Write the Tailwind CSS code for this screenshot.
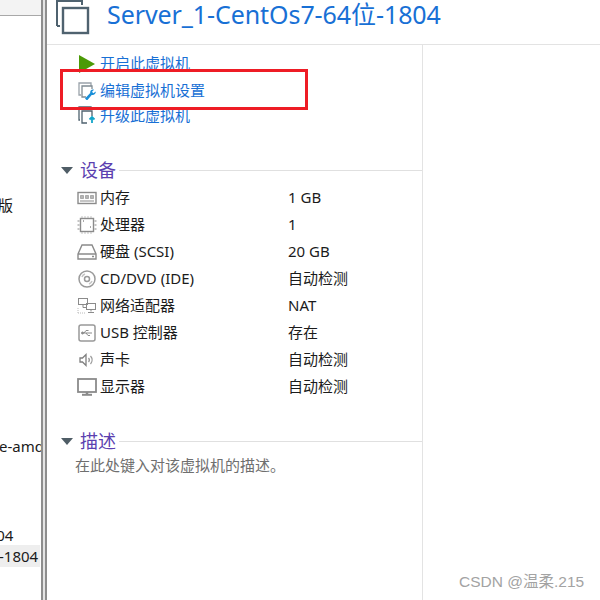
<!DOCTYPE html>
<html lang="zh-CN">
<head>
    <meta charset="UTF-8">
    <title>Server_1-CentOs7-64位-1804</title>
    <script src="https://cdn.jsdelivr.net/npm/@tailwindcss/browser@4"></script>
</head>
<body class="bg-white w-[600px] h-[600px] overflow-hidden font-['Noto_Sans','Noto_Sans_CJK_SC',sans-serif] text-[15px] text-[#1b1b1b]">
    <div class="flex h-[600px]">
        <!-- library tree, cut off on the left -->
        <aside class="w-[41px] shrink-0 overflow-hidden">
            <div class="h-[16px] bg-[#f3f3f3] border-b border-[#a8a8a8]"></div>
            <div class="mt-[178px] h-[22px] leading-[22px] -ml-[2px]">版</div>
            <div class="mt-[219px] h-[22px] leading-[22px] -ml-[1px] whitespace-nowrap">e-amd64</div>
            <div class="mt-[67px] h-[22px] leading-[22px] -ml-[21px] whitespace-nowrap">1804</div>
            <div class="-mt-[1px] h-[22px] leading-[22px] bg-[#eeeeee] mr-[1px] whitespace-nowrap pl-[2px] -indent-[3px]">-1804</div>
        </aside>
        <div class="w-[6px] shrink-0 bg-[#e4e4e4] border-x-2 border-[#8e8e8e]"></div>

        <main class="flex-1 flex flex-col min-w-0">
            <header class="h-[45px] shrink-0 flex items-center gap-[16px] pl-[8px] border-b border-[#e3e3e3]">
                <svg class="w-[36px] h-[36px] shrink-0 -mt-[10px]" viewBox="0 0 36 36" fill="none" stroke="#4f626f" stroke-width="2">
                    <path d="M2 27V2h25v4"/>
                    <path d="M2 27h3"/>
                    <rect x="8" y="9" width="25" height="25" stroke-width="2.400"/>
                </svg>
                <h1 class="text-[25px] leading-[30px] text-[#1870d5] whitespace-nowrap -mt-[16px] tracking-[-0.08px]">Server_1-CentOs7-64位-1804</h1>
            </header>

            <div class="flex flex-1 min-h-0">
                <div class="w-[376px] shrink-0 border-r border-[#e3e3e3]">
                    <!-- actions -->
                    <ul class="pt-[5px] text-[#1870d5]">
                        <li class="h-[27px] flex items-center gap-[4px] pl-[31px]">
                            <svg class="w-[18px] h-[20px]" viewBox="0 0 18 20"><path d="M1 1 17 10 1 19Z" fill="#4b9a06"/></svg>
                            <span>开启此虚拟机</span>
                        </li>
                        <li class="h-[27px] flex items-center gap-[4px] pl-[31px]">
                            <svg class="w-[18px] h-[18px]" viewBox="0 0 18 18" fill="none">
                                <path d="M3 13H1V1h12v3" stroke="#9aa3aa" stroke-width="1.300"/>
                                <path d="M8 15H4V4h10v3" stroke="#7f8b93" stroke-width="1.300"/>
                                <path d="M8.500 18 7 16.500l5.200-5.500c-.4-2.300 1.600-4 3.800-3.200L14 9.800l1.300 1.400 2.500-1.800c.3 2.300-1.900 4.200-4.100 3.500L9.500 18z" fill="#1a8fd8"/>
                            </svg>
                            <span>编辑虚拟机设置</span>
                        </li>
                        <li class="-mt-[2px] h-[26px] flex items-center gap-[4px] pl-[31px]">
                            <svg class="w-[18px] h-[18px]" viewBox="0 0 18 18" fill="none">
                                <path d="M2 14H1V1h12v1" stroke="#4f626f" stroke-width="1.300"/>
                                <path d="M9 17H4V5h10v5" stroke="#4f626f" stroke-width="1.300"/>
                                <path d="M14 17v-6M11.500 13.500 14 11l2.500 2.500" stroke="#12a5c9" stroke-width="1.800"/>
                            </svg>
                            <span>升级此虚拟机</span>
                        </li>
                    </ul>

                    <!-- devices -->
                    <section class="mt-[29px]">
                        <div class="flex items-center h-[26px] pl-[14px]">
                            <span class="w-0 h-0 border-x-[6px] border-x-transparent border-t-[7px] border-t-[#4f5d66]"></span>
                            <h2 class="ml-[7px] mr-[3px] text-[18px] text-[#5b3fb0]">设备</h2>
                            <div class="flex-1 h-px bg-[#e0e0e0]"></div>
                        </div>
                        <div class="grid grid-cols-[211px_1fr] auto-rows-[27px] items-center pl-[30px] mt-[1px]">
                            <div class="flex items-center gap-[3px]">
                                <svg class="w-[20px] h-[18px] shrink-0" viewBox="0 0 20 18" fill="none" stroke="#8b8b8b">
                                    <rect x="1" y="3.500" width="18" height="11" stroke-width="1.400"/>
                                    <path d="M3.500 6.500h3v3h-3zM8.500 6.500h3v3h-3zM13.500 6.500h3v3h-3z" fill="#b5b5b5" stroke-width="0.600"/>
                                    <path d="M3 12h14"/>
                                </svg>
                                <span>内存</span>
                            </div>
                            <div>1 GB</div>
                            <div class="flex items-center gap-[3px]">
                                <svg class="w-[20px] h-[18px] shrink-0" viewBox="0 0 20 18" fill="none" stroke="#8b8b8b">
                                    <rect x="3.500" y="2.500" width="13" height="13" stroke-width="1.400"/>
                                    <path d="M5 0.500v1M8 0.500v1M11 0.500v1M14 0.500v1M5 16.500v1M8 16.500v1M11 16.500v1M14 16.500v1M0.500 5h2M0.500 9h2M0.500 13h2M17.500 5h2M17.500 9h2M17.500 13h2"/>
                                    <path d="M6 5h1M13 11h1" stroke="#555"/>
                                </svg>
                                <span>处理器</span>
                            </div>
                            <div>1</div>
                            <div class="flex items-center gap-[3px]">
                                <svg class="w-[20px] h-[18px] shrink-0" viewBox="0 0 20 18" fill="none" stroke="#8b8b8b" stroke-width="1.400">
                                    <path d="M1 11 5 2h10l4 9v5H1z"/>
                                    <path d="M1 11h18M15 13.500h2"/>
                                </svg>
                                <span>硬盘 (SCSI)</span>
                            </div>
                            <div>20 GB</div>
                            <div class="flex items-center gap-[3px]">
                                <svg class="w-[20px] h-[18px] shrink-0" viewBox="0 0 20 18" fill="none" stroke="#9a9a9a" stroke-width="1.500">
                                    <circle cx="10" cy="9" r="8"/>
                                    <circle cx="10" cy="9" r="2.500"/>
                                    <path d="M5 7a5 5 0 0 1 3-3M15 11a5 5 0 0 1-3 3" stroke="#c4c4c4"/>
                                </svg>
                                <span>CD/DVD (IDE)</span>
                            </div>
                            <div>自动检测</div>
                            <div class="flex items-center gap-[3px]">
                                <svg class="w-[20px] h-[18px] shrink-0" viewBox="0 0 20 18" fill="none" stroke="#8b8b8b">
                                    <rect x="1.500" y="1.500" width="9" height="6"/>
                                    <rect x="9.500" y="6.500" width="9" height="6"/>
                                    <path d="M14 12.500v2M11 15.500h6M6 7.500v3h3"/>
                                    <path d="M1 16h8M1 11v5" stroke="#bbb" stroke-dasharray="1 1"/>
                                </svg>
                                <span>网络适配器</span>
                            </div>
                            <div>NAT</div>
                            <div class="flex items-center gap-[3px]">
                                <svg class="w-[20px] h-[18px] shrink-0" viewBox="0 0 20 18" fill="none" stroke="#8b8b8b">
                                    <rect x="2" y="1" width="16" height="16" rx="2" stroke="#999" stroke-width="1.500"/>
                                    <path d="M5 9h10M7 9l2-2.500h2.500M9 9l2 2.500h2"/>
                                    <circle cx="5.500" cy="9" r="1" fill="#8b8b8b"/>
                                </svg>
                                <span>USB 控制器</span>
                            </div>
                            <div>存在</div>
                            <div class="flex items-center gap-[3px]">
                                <svg class="w-[20px] h-[18px] shrink-0" viewBox="0 0 20 18" fill="none" stroke="#7f7f7f" stroke-width="1.300">
                                    <path d="M3 7v4h2.500L9 14.500v-11L5.500 7z"/>
                                    <path d="M11.500 7a3 3 0 0 1 0 4M13.500 5a6 6 0 0 1 0 8" stroke="#999"/>
                                </svg>
                                <span>声卡</span>
                            </div>
                            <div>自动检测</div>
                            <div class="flex items-center gap-[3px]">
                                <svg class="w-[20px] h-[18px] shrink-0" viewBox="0 0 20 18" fill="none" stroke="#8b8b8b">
                                    <rect x="1" y="1" width="18" height="13" stroke-width="1.800"/>
                                    <path d="M10 14v2" stroke-width="2.500"/>
                                    <path d="M5 16.800h10" stroke-width="2"/>
                                </svg>
                                <span>显示器</span>
                            </div>
                            <div>自动检测</div>
                        </div>
                    </section>

                    <!-- description -->
                    <section class="mt-[28px]">
                        <div class="flex items-center h-[26px] pl-[14px]">
                            <span class="w-0 h-0 border-x-[6px] border-x-transparent border-t-[7px] border-t-[#4f5d66]"></span>
                            <h2 class="ml-[7px] mr-[3px] text-[18px] text-[#5b3fb0]">描述</h2>
                            <div class="flex-1 h-px bg-[#e0e0e0]"></div>
                        </div>
                        <p class="pl-[28px] text-[#6f6f6f]">在此处键入对该虚拟机的描述。</p>
                    </section>
                </div>
            </div>
        </main>
    </div>

    <!-- annotation box and watermark sit over the screenshot -->
    <div class="absolute left-[60px] top-[69px] w-[248px] h-[41px] border-[3px] border-[#ee1c25]"></div>
    <div class="absolute left-[459px] top-[572px] text-[15.500px] leading-[20px] text-[#a3a3a3] font-['Liberation_Sans','Noto_Sans_CJK_SC',sans-serif] whitespace-nowrap">CSDN @温柔.215</div>
</body>
</html>
